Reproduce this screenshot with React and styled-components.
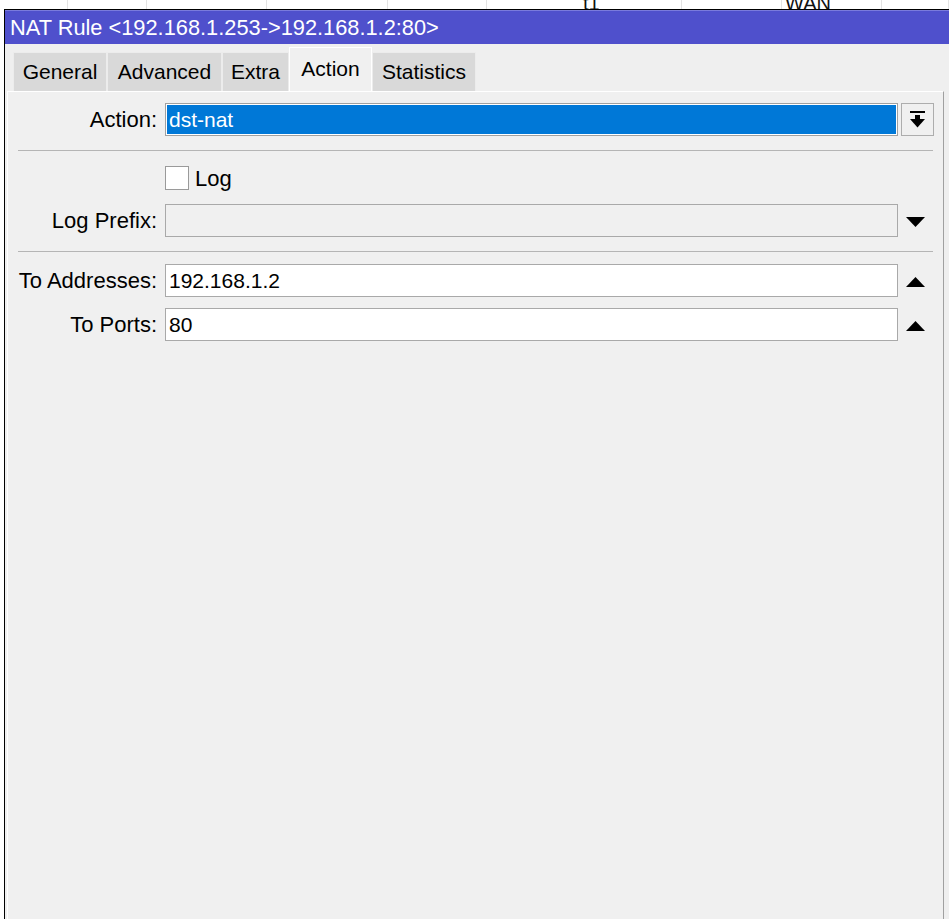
import React from 'react'
import styled, { createGlobalStyle } from 'styled-components'

const GlobalStyle = createGlobalStyle`
  html, body {
    margin: 0;
    padding: 0;
    background: #fff;
  }
  body {
    font-family: "Liberation Sans", Arial, sans-serif;
    color: #000;
  }
`

const backColumns = [
  { w: 68 },
  { w: 79 },
  { w: 120 },
  { w: 121 },
  { w: 99 },
  { w: 195, text: 't1', offset: 96 },
  { w: 100 },
  { w: 100, text: 'WAN', offset: 3 },
  { w: 67 },
]

const tabs = [
  { label: 'General', w: 94 },
  { label: 'Advanced', w: 115 },
  { label: 'Extra', w: 67 },
  { label: 'Action', w: 83, active: true },
  { label: 'Statistics', w: 104 },
]

function App() {
  return (
    <>
      <GlobalStyle />
      <Desktop>
        <BackHeader>
          {backColumns.map((c, i) => (
            <BackCell key={i} $w={c.w}>
              {c.text && <BackText $offset={c.offset}>{c.text}</BackText>}
            </BackCell>
          ))}
        </BackHeader>

        <Dialog>
          <TitleBar>NAT Rule &lt;192.168.1.253-&gt;192.168.1.2:80&gt;</TitleBar>
          <Body>
            <TabBar>
              {tabs.map(t => (
                <Tab key={t.label} $w={t.w} $active={t.active}>
                  {t.label}
                </Tab>
              ))}
            </TabBar>

            <Panel>
              <Row $mt={11}>
                <Label>Action:</Label>
                <Field>
                  <Select>dst-nat</Select>
                </Field>
                <Trailing>
                  <DropButton>
                    <svg width="15" height="17" viewBox="0 0 15 17">
                      <rect x="0" y="0" width="15" height="2" fill="#000" />
                      <rect x="5" y="4" width="5" height="5" fill="#000" />
                      <polygon points="0,8 15,8 7.5,16.5" fill="#000" />
                    </svg>
                  </DropButton>
                </Trailing>
              </Row>

              <Separator $mt={14} />

              <Row $mt={15} $h={24}>
                <Label />
                <Checkbox />
                <CheckText>Log</CheckText>
              </Row>

              <Row $mt={14}>
                <Label>Log Prefix:</Label>
                <Field>
                  <Input $disabled />
                </Field>
                <Trailing>
                  <Arrow>
                    <svg width="19" height="10" viewBox="0 0 19 10">
                      <polygon points="0,0 19,0 9.5,10" fill="#000" />
                    </svg>
                  </Arrow>
                </Trailing>
              </Row>

              <Separator $mt={14} />

              <Row $mt={12}>
                <Label>To Addresses:</Label>
                <Field>
                  <Input>192.168.1.2</Input>
                </Field>
                <Trailing>
                  <Arrow>
                    <svg width="19" height="10" viewBox="0 0 19 10">
                      <polygon points="0,10 19,10 9.5,0" fill="#000" />
                    </svg>
                  </Arrow>
                </Trailing>
              </Row>

              <Row $mt={11}>
                <Label>To Ports:</Label>
                <Field>
                  <Input>80</Input>
                </Field>
                <Trailing>
                  <Arrow>
                    <svg width="19" height="10" viewBox="0 0 19 10">
                      <polygon points="0,10 19,10 9.5,0" fill="#000" />
                    </svg>
                  </Arrow>
                </Trailing>
              </Row>
            </Panel>
          </Body>
        </Dialog>
      </Desktop>
    </>
  )
}

export default App

const Desktop = styled.div`
  width: 949px;
  height: 919px;
  overflow: hidden;
  display: flex;
  flex-direction: column;
  background: #fff;
`

const BackHeader = styled.div`
  height: 9px;
  display: flex;
  flex-shrink: 0;
  overflow: hidden;
`

const BackCell = styled.div`
  box-sizing: border-box;
  width: ${p => p.$w}px;
  flex-shrink: 0;
  height: 9px;
  border-right: 1px solid #e3e3e3;
  position: relative;
  overflow: hidden;
`

const BackText = styled.span`
  position: absolute;
  left: ${p => p.$offset}px;
  top: -7px;
  font-size: 20px;
  line-height: 20px;
  color: #111;
`

const Dialog = styled.div`
  flex: 1;
  margin-left: 4px;
  border-top: 1px solid #000;
  border-left: 1px solid #000;
  display: flex;
  flex-direction: column;
  min-height: 0;
`

const TitleBar = styled.div`
  box-sizing: border-box;
  height: 34px;
  flex-shrink: 0;
  background: #4f50cc;
  border-top: 1px solid #7a7bdc;
  color: #fff;
  font-size: 21.8px;
  padding-left: 5px;
  padding-top: 1px;
  display: flex;
  align-items: center;
  white-space: nowrap;
`

const Body = styled.div`
  flex: 1;
  background: #efefef;
  padding: 0 5px 0 2px;
  display: flex;
  flex-direction: column;
  min-height: 0;
`

const TabBar = styled.div`
  height: 47px;
  flex-shrink: 0;
  display: flex;
  align-items: flex-end;
  padding-left: 6px;
`

const Tab = styled.div`
  box-sizing: border-box;
  width: ${p => p.$w}px;
  height: ${p => (p.$active ? 44 : 39)}px;
  background: ${p => (p.$active ? '#f0f0f0' : '#d9d9d9')};
  border: 1px solid ${p => (p.$active ? '#ffffff' : '#ececec')};
  border-bottom: none;
  font-size: 21px;
  display: flex;
  align-items: center;
  justify-content: center;
  padding-bottom: ${p => (p.$active ? 1 : 0)}px;
`

const Panel = styled.div`
  flex: 1;
  background: #f0f0f0;
  border-top: 1px solid #fff;
  border-left: 1px solid #fff;
  border-right: 1px solid #a0a0a0;
  display: flex;
  flex-direction: column;
`

const Row = styled.div`
  display: flex;
  align-items: center;
  height: ${p => p.$h || 33}px;
  margin-top: ${p => p.$mt || 0}px;
`

const Label = styled.div`
  box-sizing: border-box;
  width: 149px;
  margin-right: 8px;
  text-align: right;
  font-size: 22px;
  white-space: nowrap;
`

const Field = styled.div`
  width: 733px;
  height: 100%;
`

const Select = styled.div`
  box-sizing: border-box;
  height: 100%;
  border: 1px solid #a0a0a0;
  box-shadow: inset 0 0 0 1px #fff;
  background: #0078d7;
  color: #fff;
  font-size: 21px;
  padding-left: 3px;
  display: flex;
  align-items: center;
`

const Input = styled.div`
  box-sizing: border-box;
  height: 100%;
  border: 1px solid #a9a9a9;
  background: ${p => (p.$disabled ? '#f0f0f0' : '#fff')};
  font-size: 21px;
  padding-left: 3px;
  display: flex;
  align-items: center;
`

const Trailing = styled.div`
  width: 33px;
  height: 100%;
  margin-left: 3px;
  display: flex;
  align-items: center;
`

const DropButton = styled.div`
  box-sizing: border-box;
  width: 33px;
  height: 33px;
  border: 1px solid #adadad;
  background: #f0f0f0;
  display: flex;
  align-items: center;
  justify-content: center;
`

const Arrow = styled.div`
  display: flex;
  padding-left: 5px;
  margin-top: 3px;
`

const Separator = styled.div`
  height: 1px;
  background: #b5b5b5;
  margin: ${p => p.$mt}px 10px 0 10px;
`

const Checkbox = styled.div`
  box-sizing: border-box;
  width: 24px;
  height: 24px;
  border: 1px solid #9a9a9a;
  background: #fff;
`

const CheckText = styled.span`
  margin-left: 6px;
  font-size: 22px;
  padding-top: 1px;
`
